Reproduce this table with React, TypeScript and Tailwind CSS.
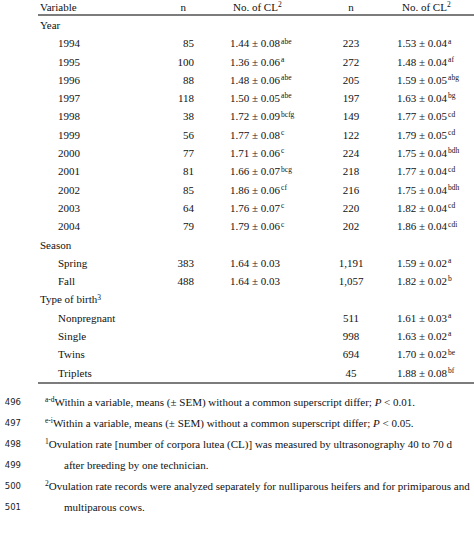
import type { ReactNode } from "react";

type Row = {
  label: ReactNode;
  indent?: boolean;
  n1?: string;
  cl1?: string;
  s1?: string;
  n2?: string;
  cl2?: string;
  s2?: string;
};

const rows: Row[] = [
  { label: "Year" },
  { label: "1994", indent: true, n1: "85", cl1: "1.44 ± 0.08", s1: "abe", n2: "223", cl2: "1.53 ± 0.04", s2: "a" },
  { label: "1995", indent: true, n1: "100", cl1: "1.36 ± 0.06", s1: "a", n2: "272", cl2: "1.48 ± 0.04", s2: "af" },
  { label: "1996", indent: true, n1: "88", cl1: "1.48 ± 0.06", s1: "abe", n2: "205", cl2: "1.59 ± 0.05", s2: "abg" },
  { label: "1997", indent: true, n1: "118", cl1: "1.50 ± 0.05", s1: "abe", n2: "197", cl2: "1.63 ± 0.04", s2: "bg" },
  { label: "1998", indent: true, n1: "38", cl1: "1.72 ± 0.09", s1: "bcfg", n2: "149", cl2: "1.77 ± 0.05", s2: "cd" },
  { label: "1999", indent: true, n1: "56", cl1: "1.77 ± 0.08", s1: "c", n2: "122", cl2: "1.79 ± 0.05", s2: "cd" },
  { label: "2000", indent: true, n1: "77", cl1: "1.71 ± 0.06", s1: "c", n2: "224", cl2: "1.75 ± 0.04", s2: "bdh" },
  { label: "2001", indent: true, n1: "81", cl1: "1.66 ± 0.07", s1: "bcg", n2: "218", cl2: "1.77 ± 0.04", s2: "cd" },
  { label: "2002", indent: true, n1: "85", cl1: "1.86 ± 0.06", s1: "cf", n2: "216", cl2: "1.75 ± 0.04", s2: "bdh" },
  { label: "2003", indent: true, n1: "64", cl1: "1.76 ± 0.07", s1: "c", n2: "220", cl2: "1.82 ± 0.04", s2: "cd" },
  { label: "2004", indent: true, n1: "79", cl1: "1.79 ± 0.06", s1: "c", n2: "202", cl2: "1.86 ± 0.04", s2: "cdi" },
  { label: "Season" },
  { label: "Spring", indent: true, n1: "383", cl1: "1.64 ± 0.03", n2: "1,191", cl2: "1.59 ± 0.02", s2: "a" },
  { label: "Fall", indent: true, n1: "488", cl1: "1.64 ± 0.03", n2: "1,057", cl2: "1.82 ± 0.02", s2: "b" },
  { label: <>Type of birth<sup className="text-[7.5px]">3</sup></> },
  { label: "Nonpregnant", indent: true, n2: "511", cl2: "1.61 ± 0.03", s2: "a" },
  { label: "Single", indent: true, n2: "998", cl2: "1.63 ± 0.02", s2: "a" },
  { label: "Twins", indent: true, n2: "694", cl2: "1.70 ± 0.02", s2: "be" },
  { label: "Triplets", indent: true, n2: "45", cl2: "1.88 ± 0.08", s2: "bf" },
];

const cols = "grid grid-cols-[122px_34px_126px_62px_92px] items-center";

const Value = ({ v, s }: { v?: string; s?: string }) =>
  v ? (
    <span>
      {v}
      {s && <sup className="text-[7.5px] ml-[1px]">{s}</sup>}
    </span>
  ) : null;

const notes: { num: string; mark?: string; text: ReactNode; hang?: boolean }[] = [
  {
    num: "496",
    mark: "a-d",
    text: (
      <>
        Within a variable, means (± SEM) without a common superscript differ; <i>P</i> &lt; 0.01.
      </>
    ),
  },
  {
    num: "497",
    mark: "e-i",
    text: (
      <>
        Within a variable, means (± SEM) without a common superscript differ; <i>P</i> &lt; 0.05.
      </>
    ),
  },
  { num: "498", mark: "1", text: "Ovulation rate [number of corpora lutea (CL)] was measured by ultrasonography 40 to 70 d" },
  { num: "499", hang: true, text: "after breeding by one technician." },
  {
    num: "500",
    mark: "2",
    text: "Ovulation rate records were analyzed separately for nulliparous heifers and for primiparous and",
  },
  { num: "501", hang: true, text: "multiparous cows." },
];

export default function App() {
  return (
    <div className="w-[474px] h-[535px] overflow-hidden bg-white text-[#111] font-['Liberation_Serif',serif] text-[11px]">
      {/* table */}
      <div className="ml-[38px] w-[436px]">
        <div className={`${cols} h-[16px] pb-[2px] border-b-2 border-[#7c7c7c] leading-[14px]`}>
          <span className="pl-[2px]">Variable</span>
          <span className="text-right pr-[8px]">n</span>
          <span className="pl-[39px]">
            No. of CL<sup className="text-[7.5px]">2</sup>
          </span>
          <span className="text-center">n</span>
          <span className="pl-[20px]">
            No. of CL<sup className="text-[7.5px]">2</sup>
          </span>
        </div>
        <div className="border-b-2 border-[#7c7c7c]">
          {rows.map((r, i) => (
            <div key={i} className={`${cols} h-[18.3px] leading-[18.3px] whitespace-nowrap`}>
              <span className={r.indent ? "pl-[20px]" : "pl-[2px]"}>{r.label}</span>
              <span className="text-right">{r.n1}</span>
              <span className="pl-[36px]">
                <Value v={r.cl1} s={r.s1} />
              </span>
              <span className="text-center">{r.n2}</span>
              <span className="pl-[15px]">
                <Value v={r.cl2} s={r.s2} />
              </span>
            </div>
          ))}
        </div>
      </div>

      {/* footnotes with line numbers */}
      <div className="mt-[8px] flex flex-col">
        {notes.map((n) => (
          <div key={n.num} className="flex items-center h-[21px] whitespace-nowrap">
            <span className="w-[21px] text-right font-['DejaVu_Sans',sans-serif] text-[8.5px] text-[#222]">
              {n.num}
            </span>
            <span className={n.hang ? "pl-[43px]" : "pl-[24px]"}>
              {n.mark && <sup className="text-[7.5px]">{n.mark}</sup>}
              {n.text}
            </span>
          </div>
        ))}
      </div>
    </div>
  );
}
